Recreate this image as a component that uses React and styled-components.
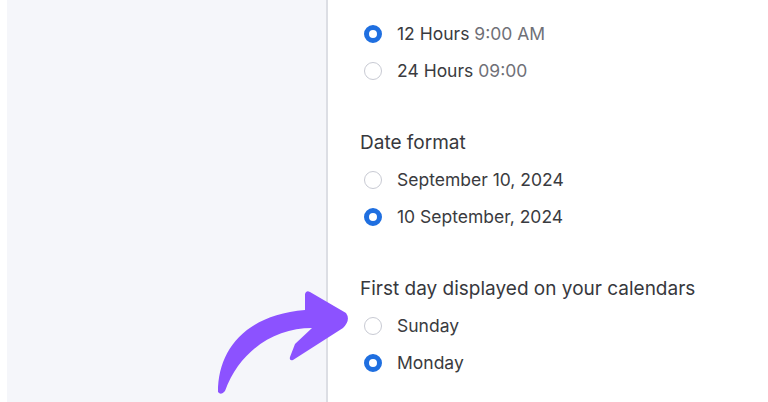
import React from "react"
import styled, { createGlobalStyle } from "styled-components"

const GlobalStyle = createGlobalStyle`
  html, body {
    margin: 0;
    padding: 0;
    background: #fff;
  }
  body {
    font-family: "Inter", "Noto Sans", sans-serif;
  }
`

const groups = [
  {
    title: null,
    options: [
      { label: "12 Hours", hint: "9:00 AM", checked: true },
      { label: "24 Hours", hint: "09:00", checked: false },
    ],
  },
  {
    title: "Date format",
    options: [
      { label: "September 10, 2024", checked: false },
      { label: "10 September, 2024", checked: true },
    ],
  },
  {
    title: "First day displayed on your calendars",
    options: [
      { label: "Sunday", checked: false },
      { label: "Monday", checked: true },
    ],
  },
]

const Arrow = () => (
  <ArrowSvg width="768" height="402" viewBox="0 0 768 402">
    <path
      d="M218 392
         C 218 350, 245 315, 305 310
         L 305 294
         Q 306 290 310 292
         L 346 313
         Q 351 320 343 328
         L 293 360
         Q 289 361 290 357
         L 295 344
         L 312 328
         C 275 328, 240 350, 225 391
         Q 221 396 218 392 Z"
      fill="#8c52ff"
    />
  </ArrowSvg>
)

export default function App() {
  return (
    <Page>
      <GlobalStyle />
      <Sidebar />
      <Content>
        {groups.map((g, i) => (
          <Group key={i}>
            {g.title && <Heading>{g.title}</Heading>}
            {g.options.map((o) => (
              <Option key={o.label}>
                <Radio checked={o.checked} />
                <Label>
                  {o.label}
                  {o.hint && <Hint> {o.hint}</Hint>}
                </Label>
              </Option>
            ))}
          </Group>
        ))}
      </Content>
      <Arrow />
    </Page>
  )
}

const Page = styled.div`
  position: relative;
  width: 768px;
  height: 402px;
  display: flex;
  padding-left: 7px;
  box-sizing: border-box;
  overflow: hidden;
  background: #fff;
`

const Sidebar = styled.div`
  width: 319px;
  height: 100%;
  background: #f5f6fa;
  border-right: 2px solid #dcdee4;
  flex-shrink: 0;
`

const Content = styled.div`
  flex: 1;
  display: flex;
  flex-direction: column;
  gap: 34px;
  padding: 15px 0 0 32px;
`

const Group = styled.div`
  display: flex;
  flex-direction: column;
`

const Heading = styled.div`
  height: 38px;
  display: flex;
  align-items: center;
  font-size: 19px;
  color: #37383d;
  white-space: nowrap;
`

const Option = styled.label`
  height: 37px;
  display: flex;
  align-items: center;
  gap: 15px;
  padding-left: 4px;
`

const Radio = styled.span`
  width: 18px;
  height: 18px;
  box-sizing: border-box;
  border-radius: 50%;
  flex-shrink: 0;
  border: ${(p) => (p.checked ? "5px solid #1f6fe0" : "1px solid #c8cad3")};
  background: #fff;
`

const Label = styled.span`
  font-size: 17.5px;
  color: #3a3b40;
`

const Hint = styled.span`
  color: #6f7077;
`

const ArrowSvg = styled.svg`
  position: absolute;
  left: 0;
  top: 0;
  pointer-events: none;
`
